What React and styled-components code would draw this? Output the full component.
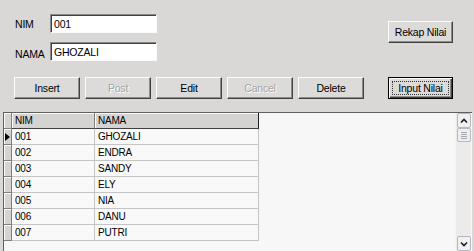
import React from 'react';
import styled, { createGlobalStyle } from 'styled-components';

const GlobalStyle = createGlobalStyle`
  html, body {
    margin: 0;
    padding: 0;
    background: #d9d8d6;
  }
  body {
    font-family: "Liberation Sans", Arial, sans-serif;
    font-size: 10px;
    letter-spacing: -0.2px;
    color: #000;
  }
`;

const Window = styled.div`
  width: 474px;
  height: 251px;
  overflow: hidden;
  display: flex;
  flex-direction: column;
  background: #d9d8d6;
`;

const TopArea = styled.div`
  display: flex;
  justify-content: space-between;
  padding: 14px 21px 0 15px;
`;

const Form = styled.div`
  display: grid;
  grid-template-columns: 35px 107px;
  row-gap: 9px;
  align-items: center;
`;

const Label = styled.span`
  font-size: 10.5px;
  padding-top: ${p => (p.low ? '4px' : '0')};
`;

const Edit = styled.div`
  height: 19px;
  box-sizing: border-box;
  background: #fff;
  border-top: 1px solid #8a8a8a;
  border-left: 1px solid #8a8a8a;
  border-right: 1px solid #fafafa;
  border-bottom: 1px solid #fafafa;
  box-shadow: inset 1px 1px 0 #404040;
  padding: 3px 0 0 3px;
  font-size: 10.5px;
  line-height: 13px;
`;

const Button = styled.div`
  width: ${p => p.w || 66}px;
  height: 22px;
  box-sizing: border-box;
  background: #dcdbd9;
  display: flex;
  align-items: center;
  justify-content: center;
  font-size: 10.5px;
  border-top: 1px solid #fbfbfb;
  border-left: 1px solid #fbfbfb;
  border-right: 1px solid #404040;
  border-bottom: 1px solid #404040;
  box-shadow: inset -1px -1px 0 #8c8c8c;
  color: ${p => (p.disabled ? '#a4a4a4' : '#000')};
  text-shadow: ${p => (p.disabled ? '1px 1px 0 #fff' : 'none')};
  position: relative;
  ${p =>
    p.isDefault &&
    `
    border: 1px solid #000;
    box-shadow: inset 1px 1px 0 #fbfbfb, inset -1px -1px 0 #404040, inset -2px -2px 0 #8c8c8c;
  `}
`;

const FocusRect = styled.span`
  position: absolute;
  inset: 3px;
  border: 1px dotted #333;
`;

const RekapWrap = styled.div`
  padding-top: 7px;
`;

const ButtonRow = styled.div`
  display: flex;
  gap: 5px;
  padding: 16px 21px 0 14px;
`;

const Spacer = styled.div`
  flex: 1;
`;

const GridFrame = styled.div`
  margin: 13px 2px 0 3px;
  flex: 1;
  display: flex;
  box-sizing: border-box;
  border-top: 1px solid #606060;
  border-left: 1px solid #606060;
  background: #f7f7f7;
`;

const Table = styled.div`
  flex: 1;
  display: grid;
  grid-template-columns: 8px 83px 164px;
  grid-auto-rows: 16px;
  align-content: start;
`;

const HeadCell = styled.div`
  background: #d4d3d1;
  box-sizing: border-box;
  border-right: 1px solid ${p => (p.last ? '#202020' : '#808080')};
  border-bottom: 1px solid #404040;
  box-shadow: inset 1px 1px 0 #fbfbfb;
  padding: 2px 0 0 3px;
  line-height: 12px;
`;

const Indicator = styled.div`
  background: #d4d3d1;
  box-sizing: border-box;
  border-right: 1px solid #808080;
  border-bottom: 1px solid #808080;
  box-shadow: inset 1px 1px 0 #fbfbfb;
  display: flex;
  align-items: center;
  justify-content: center;
`;

const Cell = styled.div`
  background: #f9f9f9;
  box-sizing: border-box;
  border-right: 1px solid #c4c4c4;
  border-bottom: 1px solid #c4c4c4;
  padding: 2px 0 0 3px;
  line-height: 12px;
  white-space: nowrap;
`;

const ScrollBar = styled.div`
  width: 15px;
  display: flex;
  flex-direction: column;
  background: #ecebe9;
  border-left: 1px solid #f4f4f4;
  margin-right: 1px;
`;

const ScrollBtn = styled.div`
  height: 15px;
  box-sizing: border-box;
  margin: 0 0 0 1px;
  background: #f0f0f0;
  border: 1px solid #b8b8c4;
  border-radius: 2px;
  display: flex;
  align-items: center;
  justify-content: center;
`;

const Thumb = styled.div`
  height: 14px;
  box-sizing: border-box;
  margin: 0 0 0 1px;
  background: #eeeeee;
  border: 1px solid #b8b8c4;
  border-radius: 2px;
  display: flex;
  flex-direction: column;
  align-items: center;
  justify-content: center;
  gap: 1px;
`;

const Grip = styled.span`
  width: 6px;
  height: 1px;
  background: #a8a8b0;
`;

const Track = styled.div`
  flex: 1;
`;

const rows = [
  ['001', 'GHOZALI'],
  ['002', 'ENDRA'],
  ['003', 'SANDY'],
  ['004', 'ELY'],
  ['005', 'NIA'],
  ['006', 'DANU'],
  ['007', 'PUTRI'],
];

const Chevron = ({ down }) => (
  <svg width="8" height="6" viewBox="0 0 8 6">
    <path
      d={down ? 'M1 1.5 L4 4.5 L7 1.5' : 'M1 4.5 L4 1.5 L7 4.5'}
      fill="none"
      stroke="#1c1c2c"
      strokeWidth="1.6"
    />
  </svg>
);

export default function App() {
  return (
    <Window>
      <GlobalStyle />
      <TopArea>
        <Form>
          <Label>NIM</Label>
          <Edit>001</Edit>
          <Label low>NAMA</Label>
          <Edit>GHOZALI</Edit>
        </Form>
        <RekapWrap>
          <Button w={65}>Rekap Nilai</Button>
        </RekapWrap>
      </TopArea>
      <ButtonRow>
        <Button>Insert</Button>
        <Button disabled>Post</Button>
        <Button>Edit</Button>
        <Button disabled>Cancel</Button>
        <Button>Delete</Button>
        <Spacer />
        <Button w={65} isDefault>
          <FocusRect />
          Input Nilai
        </Button>
      </ButtonRow>
      <GridFrame>
        <Table>
          <Indicator />
          <HeadCell>NIM</HeadCell>
          <HeadCell last>NAMA</HeadCell>
          {rows.map(([nim, nama], i) => (
            <React.Fragment key={nim}>
              <Indicator>
                {i === 0 && (
                  <svg width="5" height="8" viewBox="0 0 5 8">
                    <path d="M0 0 L5 4 L0 8 Z" fill="#000" />
                  </svg>
                )}
              </Indicator>
              <Cell>{nim}</Cell>
              <Cell>{nama}</Cell>
            </React.Fragment>
          ))}
        </Table>
        <ScrollBar>
          <ScrollBtn>
            <Chevron />
          </ScrollBtn>
          <Thumb>
            <Grip />
            <Grip />
            <Grip />
            <Grip />
          </Thumb>
          <Track />
          <ScrollBtn>
            <Chevron down />
          </ScrollBtn>
        </ScrollBar>
      </GridFrame>
    </Window>
  );
}
